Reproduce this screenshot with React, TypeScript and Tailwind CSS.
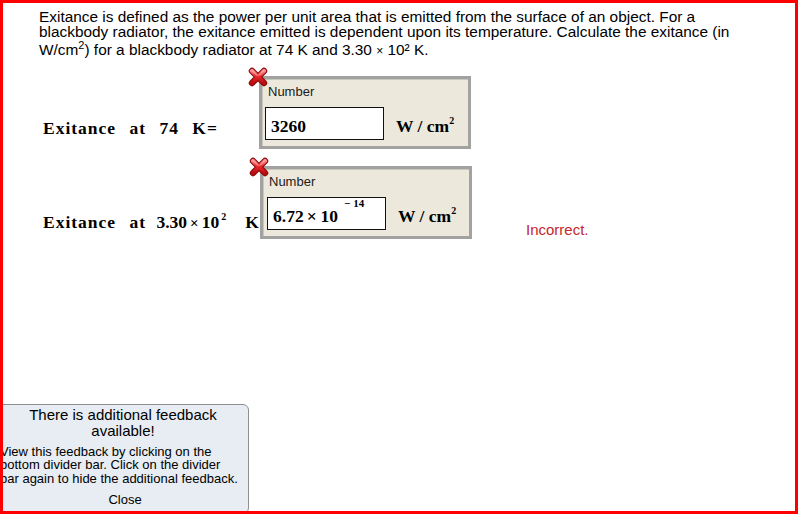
import React from "react";

function RedX() {
  return (
    <svg width="20" height="20" viewBox="0 0 20 20" className="absolute left-[-14px] top-[-12px] z-10">
      <defs>
        <linearGradient id="xg" x1="0" y1="0" x2="0" y2="1">
          <stop offset="0" stopColor="#ff8a8a" />
          <stop offset="0.45" stopColor="#e8282c" />
          <stop offset="1" stopColor="#b80d10" />
        </linearGradient>
      </defs>
      <path d="M4 4 L16 16 M16 4 L4 16" stroke="#8a0a0c" strokeWidth="6.4" strokeLinecap="round" fill="none" />
      <path d="M4 4 L16 16 M16 4 L4 16" stroke="url(#xg)" strokeWidth="4.2" strokeLinecap="round" fill="none" />
      <path d="M4.2 3.6 L9 8.4 M15.8 3.6 L11 8.4" stroke="#ffc4c4" strokeWidth="1" strokeLinecap="round" fill="none" opacity="0.8" />
    </svg>
  );
}

function Units() {
  return (
    <div className="ml-[12px] pt-[10px] whitespace-nowrap font-['Liberation_Serif','Times_New_Roman',serif] font-bold text-[17.5px] leading-[18px]">
      W / cm<span className="relative -top-[8px] text-[10px]">2</span>
    </div>
  );
}

function Box({ children, shift }: { children: React.ReactNode; shift?: boolean }) {
  return (
    <div
      className={
        "relative shrink-0 w-[212px] border-[3px] border-[#a2a2a0] bg-[#ece9dc] pt-[5px] pb-[6px] shadow-[inset_1px_1px_0_#c9c7bd] " +
        (shift ? "ml-[1px]" : "")
      }
    >
      <RedX />
      <div className="pl-[6px] font-['Liberation_Sans',Arial,sans-serif] text-[13px] leading-[15px] text-[#1a1a1a]">Number</div>
      <div className={"mt-[8px] flex items-start " + (shift ? "pl-[4px]" : "pl-[3px]")}>
        <div className="w-[119px] h-[33px] shrink-0 border border-[#111] bg-white pl-[5px] pt-[9px] whitespace-nowrap font-['Liberation_Serif','Times_New_Roman',serif] font-bold text-[17.5px] leading-[18px]">
          {children}
        </div>
        <Units />
      </div>
    </div>
  );
}

export default function App() {
  return (
    <div className="relative w-[798px] h-[514px] overflow-hidden bg-white text-black font-['Liberation_Sans',Arial,sans-serif]">
      <div className="pl-[39px] pt-[9px] text-[15.4px] leading-[15px] whitespace-nowrap">
        <div>Exitance is defined as the power per unit area that is emitted from the surface of an object. For a</div>
        <div>blackbody radiator, the exitance emitted is dependent upon its temperature. Calculate the exitance (in</div>
        <div className="mt-[3px]">
          W/cm<span className="relative -top-[6px] text-[11px]">2</span>) for a blackbody radiator at 74 K and 3.30 <span className="text-[12px]">×</span> 10² K.
        </div>
      </div>

      <div className="mt-[17px] pl-[43px] flex flex-col gap-[17px]">
        <div className="flex items-start">
          <div className="w-[216px] shrink-0 mt-[42px] whitespace-nowrap font-['Liberation_Serif','Times_New_Roman',serif] font-bold text-[17.5px] leading-[20px] tracking-[1px] [word-spacing:8px]">
            Exitance at 74 K=
          </div>
          <Box>3260</Box>
        </div>

        <div className="flex items-start">
          <div className="w-[216px] shrink-0 mt-[46px] whitespace-nowrap font-['Liberation_Serif','Times_New_Roman',serif] font-bold text-[17.5px] leading-[20px] tracking-[1px] [word-spacing:8px]">
            Exitance at{" "}
            <span className="tracking-normal ml-[-3px]">3.30</span>
            <span className="tracking-normal text-[15px] ml-[3px] mr-[3px]">×</span>
            <span className="tracking-normal">10</span>
            <span className="relative -top-[8px] text-[10px] tracking-normal ml-[2px]">2</span>
            <span className="ml-[19px]">K</span>
          </div>
          <Box shift>
            6.72<span className="ml-[3px]">×</span>
            <span className="ml-[4px]">10</span>
            <span className="relative -top-[15px] text-[11px] ml-[6px]">− 14</span>
          </Box>
          <div className="ml-[54px] mt-[55px] text-[15px] leading-[17px] text-[#c4262c] whitespace-nowrap">Incorrect.</div>
        </div>
      </div>

      <div className="absolute left-[-5px] top-[404px] w-[254px] h-[110px] rounded-[6px] border border-[#8f8f8f] bg-[#e7edf3] pl-[4px] pr-[2px] pt-[2px] text-[13px] text-black">
        <div className="text-center text-[15px] leading-[16px]">
          There is additional feedback
          <br />
          available!
        </div>
        <div className="mt-[6px] leading-[13.4px] whitespace-nowrap">
          View this feedback by clicking on the
          <br />
          bottom divider bar. Click on the divider
          <br />
          bar again to hide the additional feedback.
        </div>
        <div className="mt-[7px] pl-[4px] text-center leading-[16px]">Close</div>
      </div>

      <div className="pointer-events-none absolute inset-0 z-20 border-[3px] border-[#ff0000]" />
    </div>
  );
}
